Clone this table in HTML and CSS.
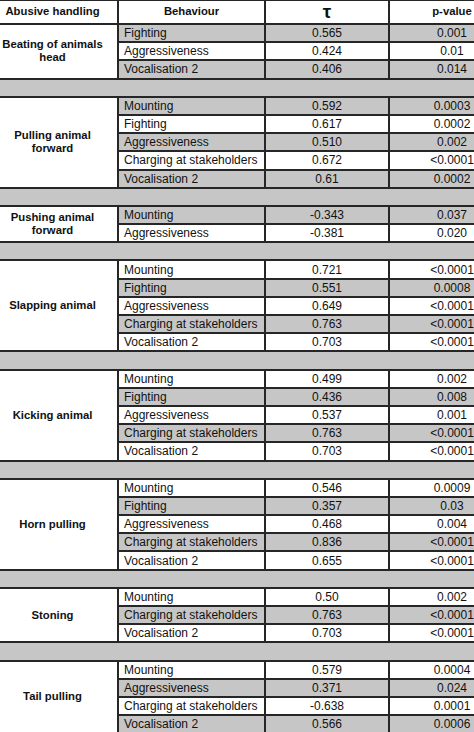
FILE: index.html
```html
<!DOCTYPE html>
<html>
<head>
<meta charset="utf-8">
<link rel="stylesheet" href="styles.css">
</head>
<body>
<table class="tbl">
<colgroup><col class="c1"><col class="c2"><col class="c3"><col class="c4"></colgroup>
<thead>
<tr class="hdr"><th>Abusive handling</th><th>Behaviour</th><th class="tau">τ</th><th>p-value</th></tr>
</thead>
<tbody>
<tr class="g"><td class="grp" rowspan="3">Beating of animals<br>head</td><td class="b">Fighting</td><td>0.565</td><td>0.001</td></tr>
<tr><td class="b">Aggressiveness</td><td>0.424</td><td>0.01</td></tr>
<tr class="g"><td class="b">Vocalisation 2</td><td>0.406</td><td>0.014</td></tr>
<tr class="sep"><td colspan="4"></td></tr>

<tr class="g"><td class="grp" rowspan="5">Pulling animal<br>forward</td><td class="b">Mounting</td><td>0.592</td><td>0.0003</td></tr>
<tr><td class="b">Fighting</td><td>0.617</td><td>0.0002</td></tr>
<tr class="g"><td class="b">Aggressiveness</td><td>0.510</td><td>0.002</td></tr>
<tr><td class="b">Charging at stakeholders</td><td>0.672</td><td>&lt;0.0001</td></tr>
<tr class="g"><td class="b">Vocalisation 2</td><td>0.61</td><td>0.0002</td></tr>
<tr class="sep"><td colspan="4"></td></tr>

<tr class="g"><td class="grp" rowspan="2">Pushing animal<br>forward</td><td class="b">Mounting</td><td>-0.343</td><td>0.037</td></tr>
<tr><td class="b">Aggressiveness</td><td>-0.381</td><td>0.020</td></tr>
<tr class="sep"><td colspan="4"></td></tr>

<tr><td class="grp" rowspan="5">Slapping animal</td><td class="b">Mounting</td><td>0.721</td><td>&lt;0.0001</td></tr>
<tr class="g"><td class="b">Fighting</td><td>0.551</td><td>0.0008</td></tr>
<tr><td class="b">Aggressiveness</td><td>0.649</td><td>&lt;0.0001</td></tr>
<tr class="g"><td class="b">Charging at stakeholders</td><td>0.763</td><td>&lt;0.0001</td></tr>
<tr><td class="b">Vocalisation 2</td><td>0.703</td><td>&lt;0.0001</td></tr>
<tr class="sep"><td colspan="4"></td></tr>

<tr><td class="grp" rowspan="5">Kicking animal</td><td class="b">Mounting</td><td>0.499</td><td>0.002</td></tr>
<tr class="g"><td class="b">Fighting</td><td>0.436</td><td>0.008</td></tr>
<tr><td class="b">Aggressiveness</td><td>0.537</td><td>0.001</td></tr>
<tr class="g"><td class="b">Charging at stakeholders</td><td>0.763</td><td>&lt;0.0001</td></tr>
<tr><td class="b">Vocalisation 2</td><td>0.703</td><td>&lt;0.0001</td></tr>
<tr class="sep"><td colspan="4"></td></tr>

<tr><td class="grp" rowspan="5">Horn pulling</td><td class="b">Mounting</td><td>0.546</td><td>0.0009</td></tr>
<tr class="g"><td class="b">Fighting</td><td>0.357</td><td>0.03</td></tr>
<tr><td class="b">Aggressiveness</td><td>0.468</td><td>0.004</td></tr>
<tr class="g"><td class="b">Charging at stakeholders</td><td>0.836</td><td>&lt;0.0001</td></tr>
<tr><td class="b">Vocalisation 2</td><td>0.655</td><td>&lt;0.0001</td></tr>
<tr class="sep"><td colspan="4"></td></tr>

<tr><td class="grp" rowspan="3">Stoning</td><td class="b">Mounting</td><td>0.50</td><td>0.002</td></tr>
<tr class="g"><td class="b">Charging at stakeholders</td><td>0.763</td><td>&lt;0.0001</td></tr>
<tr><td class="b">Vocalisation 2</td><td>0.703</td><td>&lt;0.0001</td></tr>
<tr class="sep"><td colspan="4"></td></tr>

<tr><td class="grp" rowspan="4">Tail pulling</td><td class="b">Mounting</td><td>0.579</td><td>0.0004</td></tr>
<tr class="g"><td class="b">Aggressiveness</td><td>0.371</td><td>0.024</td></tr>
<tr><td class="b">Charging at stakeholders</td><td>-0.638</td><td>0.0001</td></tr>
<tr class="g"><td class="b">Vocalisation 2</td><td>0.566</td><td>0.0006</td></tr>
</tbody>
</table>
</body>
</html>
```
FILE: styles.css
```css
html, body {
  margin: 0;
  padding: 0;
  background: #ffffff;
  overflow: hidden;
}
body {
  width: 474px;
  height: 732px;
  font-family: "Liberation Sans", Arial, sans-serif;
  color: #111;
}
.tbl {
  border-collapse: collapse;
  table-layout: fixed;
  width: 528px;
  margin-left: -14px;
  margin-top: -1px;
  font-size: 12px;
}
.c1 { width: 131px; }
.c2 { width: 147px; }
.c3 { width: 124px; }
.c4 { width: 126px; }
.tbl th, .tbl td {
  border: 2px solid #262626;
  padding: 0;
  vertical-align: middle;
  text-align: center;
  line-height: 1;
  white-space: nowrap;
  overflow: hidden;
}
.hdr { height: 24px; }
.hdr th {
  font-size: 11.3px;
  font-weight: bold;
  padding-bottom: 1px;
}
.hdr th.tau {
  font-size: 19px;
  font-weight: bold;
  line-height: 1;
}
.tbl tbody tr { height: 18.2px; }
.tbl td.b {
  text-align: left;
  padding-left: 5px;
}
.tbl td.grp {
  background: #ffffff;
  font-size: 11.3px;
  font-weight: bold;
  line-height: 13px;
  white-space: normal;
}
.tbl tr.g td { background: #c6c6c6; }
.tbl tr.g td.grp { background: #ffffff; }
.tbl tr.sep td {
  background: #c6c6c6;
  border-left: none;
  border-right: none;
}
```
